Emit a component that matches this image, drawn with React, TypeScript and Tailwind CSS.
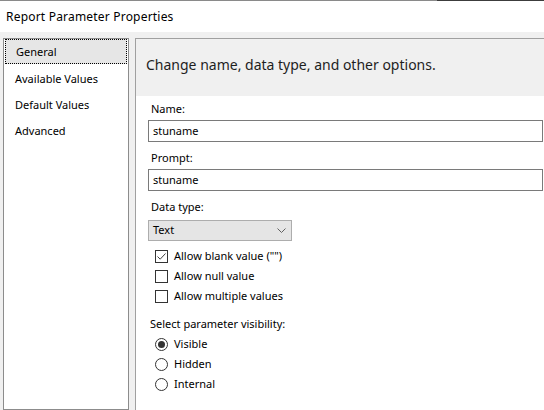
import React from "react";

function CheckRow({ label, checked }: { label: string; checked?: boolean }) {
  return (
    <div className="h-[20px] flex items-center ml-[7px] gap-[6px]">
      <div className="w-[13px] h-[13px] border border-[#333333] bg-white flex items-center justify-center">
        {checked && (
          <svg width="11" height="11" viewBox="0 0 11 11">
            <path d="M1.5 5.5 L4.2 8.2 L9.5 2.5" fill="none" stroke="#404040" strokeWidth="1" />
          </svg>
        )}
      </div>
      <span className="text-[11px] text-black leading-[16px]">{label}</span>
    </div>
  );
}

function RadioRow({ label, checked }: { label: string; checked?: boolean }) {
  return (
    <div className="h-[20px] flex items-center ml-[7px] gap-[6px]">
      <div className="w-[13px] h-[13px] rounded-full border border-[#333333] bg-white flex items-center justify-center">
        {checked && <div className="w-[7px] h-[7px] rounded-full bg-[#333333]" />}
      </div>
      <span className="text-[11px] text-black leading-[16px]">{label}</span>
    </div>
  );
}

export default function App() {
  const items = ["General", "Available Values", "Default Values", "Advanced"];
  return (
    <div
      className="w-[544px] h-[410px] overflow-hidden bg-[#f0f0f0] flex flex-col text-black"
      style={{ fontFamily: '"Noto Sans", "Open Sans", sans-serif' }}
    >
      <div className="h-px flex">
        <div className="w-[437px] bg-[#8a8a8a]" />
        <div className="flex-1 bg-[#3c3c3c]" />
      </div>
      <div className="h-[31px] bg-white flex items-center pl-[6px] text-[12px] tracking-[0.2px]">
        Report Parameter Properties
      </div>
      <div className="flex-1 flex pt-[6px] pl-[3px] gap-[6px] min-h-0">
        <div className="w-[126px] border border-[#8c8c8c] bg-white flex flex-col pt-0">
          {items.map((it, i) => (
            <div
              key={it}
              className={
                i === 0
                  ? "h-[25px] mx-px mb-px flex items-center pl-[10px] pt-[2px] text-[11px] bg-[#e6e6e6] border border-dotted border-black"
                  : "h-[26px] flex items-center pl-[11px] pt-[2px] text-[11px]"
              }
            >
              {it}
            </div>
          ))}
        </div>
        <div className="flex-1 border-l border-t border-[#a0a0a0] flex flex-col">
          <div className="h-[57px] bg-[#f0f0f0] flex items-center pl-[10px] pb-[6px] text-[14px] text-[#1e1e1e]">
            Change name, data type, and other options.
          </div>
          <div className="flex-1 bg-white flex flex-col pl-[12px] pt-[5px]">
            <div className="text-[11px] leading-[16px] pl-[3px]">Name:</div>
            <div className="mt-[3px] w-[395px] h-[22px] border border-[#7a7a7a] flex items-center pl-[4px] text-[11px]">
              stuname
            </div>
            <div className="mt-[8px] text-[11px] leading-[16px] pl-[3px]">Prompt:</div>
            <div className="mt-[3px] w-[395px] h-[22px] border border-[#7a7a7a] flex items-center pl-[4px] text-[11px]">
              stuname
            </div>
            <div className="mt-[8px] text-[11px] leading-[16px] pl-[3px]">Data type:</div>
            <div className="mt-[5px] w-[144px] h-[21px] border border-[#adadad] bg-[#e5e5e5] flex items-center justify-between pl-[4px] pr-[5px] text-[11px]">
              <span>Text</span>
              <svg width="9" height="6" viewBox="0 0 9 6">
                <path d="M0.5 0.5 L4.5 4.5 L8.5 0.5" fill="none" stroke="#606060" strokeWidth="1" />
              </svg>
            </div>
            <div className="mt-[5px] flex flex-col">
              <CheckRow label={'Allow blank value ("")'} checked />
              <CheckRow label="Allow null value" />
              <CheckRow label="Allow multiple values" />
            </div>
            <div className="mt-[10px] text-[11px] leading-[16px] pl-[2px]">Select parameter visibility:</div>
            <div className="mt-[2px] flex flex-col">
              <RadioRow label="Visible" checked />
              <RadioRow label="Hidden" />
              <RadioRow label="Internal" />
            </div>
          </div>
        </div>
      </div>
    </div>
  );
}
